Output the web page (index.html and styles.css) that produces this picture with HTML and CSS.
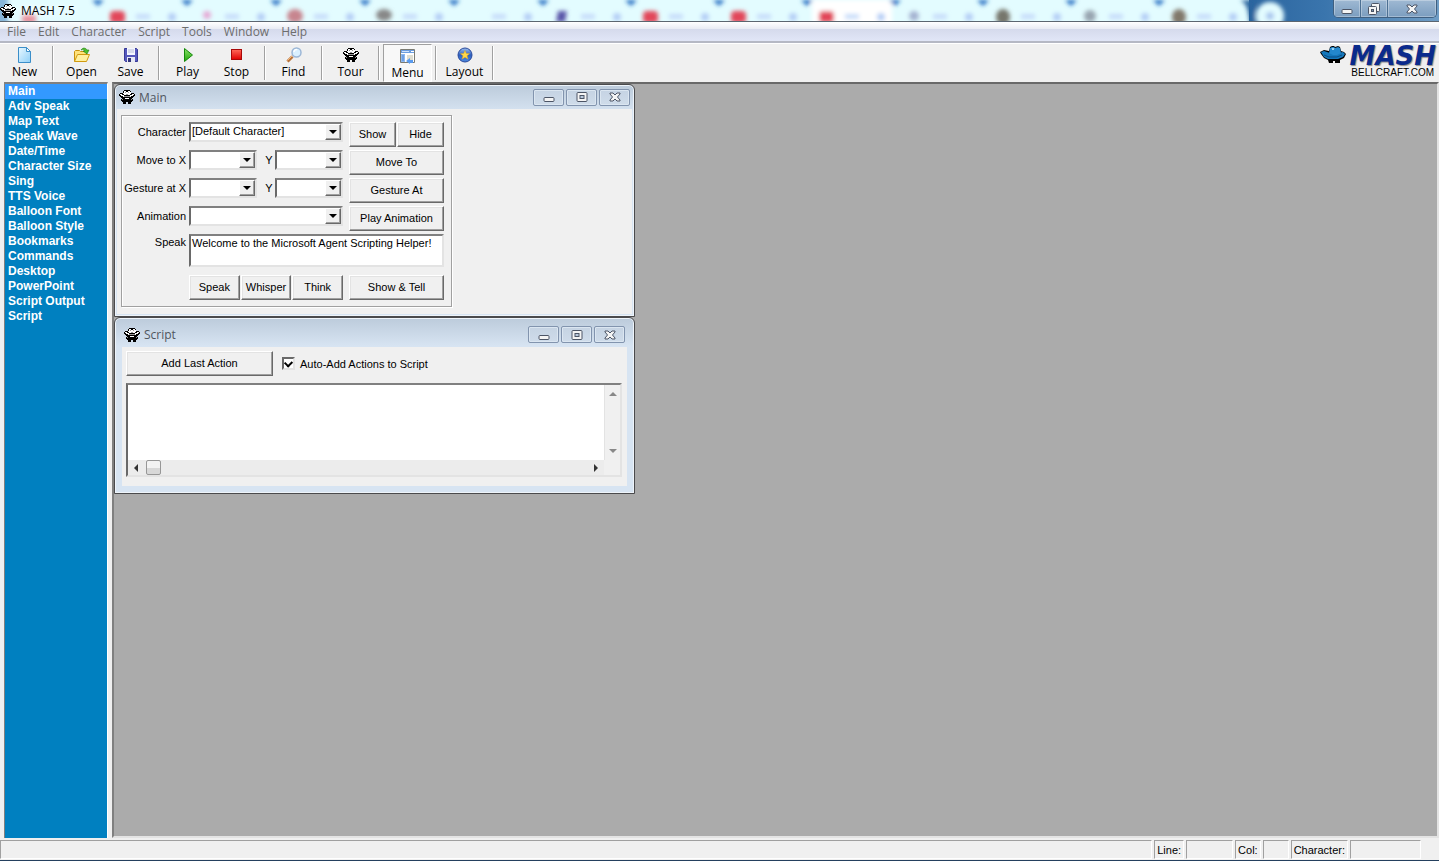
FILE: index.html
```
<!DOCTYPE html>
<html lang="en">
<head>
    <meta charset="utf-8">
    <title>MASH 7.5</title>
    <link rel="stylesheet" href="styles.css">
</head>
<body>
    <svg class="defs" width="0" height="0">
        <symbol id="agent" viewBox="0 0 16 16">
            <g shape-rendering="crispEdges">
                <path fill="#000" d="M5 1h6v1h1v2h3v1h1v2h-1v1h-1v1h-1v1h1v2h-1v1h-1v2H9v-2H7v2H4v-2H3v-1H2v-2h1V9H2V8H1V7H0V5h1V4h3V2h1z"/>
                <path fill="#fff" d="M5 2h2v1h2V2h2v1h1v2h-1v1H5V5H4V4h1zM1 5h2v1h2v1h6V6h2V5h2v1h-1v1h-2v1H4V7H2V6H1zM6 9h4v1H6z"/>
                <path fill="#999" d="M6 3h1v1H6zM9 3h1v1H9zM7 5h2v1H7zM5 7h6v1H5zM3 10h1v1H3zM12 10h1v1h-1z"/>
            </g>
        </symbol>
        <symbol id="win-min" viewBox="0 0 12 12">
            <rect x="1" y="6.500" width="10" height="4" rx="1" fill="#f4f4f4" stroke="#4c5566"/>
        </symbol>
        <symbol id="win-max" viewBox="0 0 12 12">
            <rect x="1" y="1.500" width="10" height="9" rx="1" fill="#f4f4f4" stroke="#4c5566"/>
            <rect x="4" y="4.500" width="4" height="3" fill="#b9c9dc" stroke="#4c5566"/>
        </symbol>
        <symbol id="win-restore" viewBox="0 0 12 12">
            <rect x="3.500" y=".5" width="8" height="8" rx="1" fill="#f4f4f4" stroke="#4c5566"/>
            <rect x=".5" y="3.500" width="8" height="8" rx="1" fill="#f4f4f4" stroke="#4c5566"/>
            <rect x="3.500" y="6.500" width="2" height="2" fill="#7894b5" stroke="#4c5566"/>
        </symbol>
        <symbol id="win-close" viewBox="0 0 12 12">
            <path fill="#f4f4f4" stroke="#4c5566" stroke-linejoin="round" d="M1 2h3l2 2 2-2h3v1L8.500 6 11 9v1H8L6 8l-2 2H1V9l2.500-3L1 3z"/>
        </symbol>
        <symbol id="tab" viewBox="0 0 89 21">
            <path d="M0-2h16L8 6z" fill="#1f68c0"/>
            <rect x="46" y="14" width="14" height="5" fill="#c6dcfa"/>
            <circle cx="82" cy="17" r="4" fill="#b3cdf6"/>
        </symbol>
    </svg>

    <header class="titlebar">
        <svg class="glass" width="1439" height="21" aria-hidden="true">
            <defs>
                <filter id="soft" x="-5%" y="-50%" width="110%" height="200%"><feGaussianBlur stdDeviation="2"/></filter>
                <linearGradient id="sky">
                    <stop offset="0" stop-color="#2b659f"/>
                    <stop offset=".4" stop-color="#3a75ad"/>
                    <stop offset="1" stop-color="#6f9dc5"/>
                </linearGradient>
            </defs>
            <rect width="1439" height="21" fill="#e3fcff"/>
            <rect x="1249" width="190" height="21" fill="url(#sky)"/>
            <g filter="url(#soft)">
                <rect x="-6" y="-6" width="14" height="34" fill="#87b5d8"/>
                <rect x="812" y="0" width="80" height="24" fill="#fff"/>
                <use href="#tab" x="90" width="89" height="21"/>
                <use href="#tab" x="179" width="89" height="21"/>
                <use href="#tab" x="268" width="89" height="21"/>
                <use href="#tab" x="357" width="89" height="21"/>
                <use href="#tab" x="446" width="89" height="21"/>
                <use href="#tab" x="535" width="89" height="21"/>
                <use href="#tab" x="623" width="89" height="21"/>
                <use href="#tab" x="711" width="89" height="21"/>
                <use href="#tab" x="799" width="89" height="21"/>
                <use href="#tab" x="887" width="89" height="21"/>
                <use href="#tab" x="975" width="89" height="21"/>
                <use href="#tab" x="1063" width="89" height="21"/>
                <use href="#tab" x="1151" width="89" height="21"/>
                <g fill="#e2465a">
                    <rect x="22" y="14" width="14" height="9" rx="4" fill="#e98d9a"/>
                    <rect x="110" y="11" width="15" height="12" rx="4"/>
                    <rect x="643" y="11" width="15" height="12" rx="4"/>
                    <rect x="731" y="11" width="15" height="12" rx="4"/>
                    <rect x="819" y="11" width="15" height="12" rx="4"/>
                </g>
                <circle cx="207" cy="15" r="4" fill="#e5a9d5"/>
                <ellipse cx="295" cy="16" rx="8" ry="7" fill="#c7858f"/>
                <ellipse cx="384" cy="15" rx="8" ry="6" fill="#888"/>
                <path d="M556 22l2-11h9l-2 11z" fill="#5854a8"/>
                <circle cx="914" cy="16" r="5" fill="#a4b2d0"/>
                <ellipse cx="1003" cy="17" rx="7" ry="8" fill="#76766c"/>
                <circle cx="1090" cy="16" r="6" fill="#98a5b0"/>
                <ellipse cx="1179" cy="17" rx="7" ry="8" fill="#81786a"/>
                <path d="M1240 0c9 4 8 15 10 24h5V0z" fill="#2b659f"/>
                <circle cx="1270" cy="16" r="14" fill="#e3fcff"/>
                <circle cx="1270" cy="16" r="4" fill="#a9c6ee"/>
            </g>
        </svg>
        <svg class="icon16"><use href="#agent"/></svg>
        <h1>MASH 7.5</h1>
        <div class="app-controls">
            <button aria-label="Minimize"><svg><use href="#win-min"/></svg></button>
            <button aria-label="Restore"><svg><use href="#win-restore"/></svg></button>
            <button class="wide" aria-label="Close"><svg><use href="#win-close"/></svg></button>
        </div>
    </header>

    <nav class="menubar">
        <button>File</button>
        <button>Edit</button>
        <button>Character</button>
        <button>Script</button>
        <button>Tools</button>
        <button>Window</button>
        <button>Help</button>
    </nav>

    <div class="toolbar">
        <button class="tool">
            <svg viewBox="0 0 16 16"><defs><linearGradient id="page" x2="1" y2="1"><stop stop-color="#e8f8ff"/><stop offset="1" stop-color="#8fd0f8"/></linearGradient></defs><path d="M1.500.5h8l4 4v11h-12z" fill="url(#page)" stroke="#3b8ec9"/><path d="M9.500.5v4h4z" fill="#fff" stroke="#3b8ec9"/></svg>
            New
        </button>
        <span class="sep"></span>
        <button class="tool">
            <svg viewBox="0 0 16 16"><path d="M.5 14.500V4.500l1-1h4l1 1h6v3" fill="#ffe27a" stroke="#c8900c"/><path d="M.5 14.500l3-7h12l-3 7z" fill="#fff0a0" stroke="#d09a10"/><path d="M7 3c2-3 5-2 6 0h2l-2 4-4-3h2c-1-1-2-2-4-1z" fill="#4fc12c" stroke="#25801a" stroke-width=".6"/></svg>
            Open
        </button>
        <button class="tool">
            <svg viewBox="0 0 16 16"><path d="M1.500 1.500h12l1 1v12h-12l-1-1z" fill="#5558bd" stroke="#363995"/><path d="M4 1h8v7H4z" fill="#f4f6ff"/><path d="M5 3h6M5 5h6" stroke="#b8bed8"/><path d="M4 10h8v5H4z" fill="#e6e8f4"/><path d="M5 11h3v4H5z" fill="#34377c"/></svg>
            Save
        </button>
        <span class="sep"></span>
        <button class="tool">
            <svg viewBox="0 0 16 16"><defs><linearGradient id="go" x2="0" y2="1"><stop stop-color="#8be36a"/><stop offset="1" stop-color="#22a40c"/></linearGradient></defs><path d="M4.500 1.500v13l8-6.500z" fill="url(#go)" stroke="#148a0a"/></svg>
            Play
        </button>
        <button class="tool">
            <svg viewBox="0 0 16 16"><defs><linearGradient id="halt" x2="0" y2="1"><stop stop-color="#ff6a5a"/><stop offset="1" stop-color="#e00000"/></linearGradient></defs><rect x="2.500" y="2.500" width="10" height="10" fill="url(#halt)" stroke="#a80808"/></svg>
            Stop
        </button>
        <span class="sep"></span>
        <button class="tool">
            <svg viewBox="0 0 16 16"><path d="M1.500 14.500l5-5" stroke="#b8733a" stroke-width="3"/><path d="M1.500 13.500l5-5" stroke="#f5b97c"/><circle cx="10.500" cy="5.500" r="4.500" fill="#d9f0ff" stroke="#9bb6d6" stroke-width="1.500"/><path d="M8 5c0-2 2-3 3-2" fill="none" stroke="#fff" stroke-width="1.500"/></svg>
            Find
        </button>
        <span class="sep"></span>
        <button class="tool">
            <svg><use href="#agent"/></svg>
            Tour
        </button>
        <span class="sep"></span>
        <button class="tool pressed" aria-pressed="true">
            <svg viewBox="0 0 16 16"><path d="M.5 1.500h14v13H.5z" fill="#fff" stroke="#7b7b72"/><path d="M1 2h13v3H1z" fill="#6c9ee0"/><path d="M2 3h7v1H2z" fill="#cfe2fb"/><path d="M11 3h3v1h-3z" fill="#fff"/><path d="M1 6h4v8H1z" fill="#8db8f0"/><path d="M2 8h2M2 10h2M2 12h2" stroke="#4f86d4"/><path d="M7 7h6v5H7z" fill="#deded2"/><path d="M6 13l4-3v2h3v3h-3v1z" fill="#5a9bee"/></svg>
            Menu
        </button>
        <span class="sep"></span>
        <button class="tool">
            <svg viewBox="0 0 16 16"><defs><linearGradient id="ball" x2="0" y2="1"><stop stop-color="#9fc0ee"/><stop offset=".5" stop-color="#2c5fc0"/><stop offset="1" stop-color="#4f8be0"/></linearGradient></defs><circle cx="8" cy="8" r="7" fill="url(#ball)" stroke="#28489a"/><path d="M8 3.500l1.300 3 3.200.2-2.500 2 .9 3.300L8 10.200 5.100 12 6 8.700l-2.500-2 3.200-.2z" fill="#ffd94a" stroke="#e8a818" stroke-width=".5"/></svg>
            Layout
        </button>
        <span class="sep"></span>
        <a class="brand" href="#">
            <svg class="brand-hat" viewBox="0 0 26 20"><path d="M0 7l4-2 5 1 1-4 2-1h2l1 1 3-1 2 1 1 4 3 1 2 2-2 4-4 2v3h-5v-2h-2v2H9l-1-3-4-2-3-4z" fill="#000"/><path d="M1 7l3-1 6 2h8l5-1 2 2-2 3-5 2H8l-4-2z" fill="#1477bb"/><path d="M9 8l1-5 2-1h2l1 1 3-1 2 1 1 5-4 2h-4z" fill="#2387cc"/><path d="M12 3l1 2 1-2" fill="none" stroke="#b5e8ff"/><path d="M4 10l5 2h8l5-2" fill="none" stroke="#0a4f86"/></svg>
            <span class="brand-text">
                <span class="brand-name">MASH</span>
                <span class="brand-site">BELLCRAFT.COM</span>
            </span>
        </a>
    </div>

    <div class="body">
        <ul class="sidebar">
            <li class="selected"><a href="#">Main</a></li>
            <li><a href="#">Adv Speak</a></li>
            <li><a href="#">Map Text</a></li>
            <li><a href="#">Speak Wave</a></li>
            <li><a href="#">Date/Time</a></li>
            <li><a href="#">Character Size</a></li>
            <li><a href="#">Sing</a></li>
            <li><a href="#">TTS Voice</a></li>
            <li><a href="#">Balloon Font</a></li>
            <li><a href="#">Balloon Style</a></li>
            <li><a href="#">Bookmarks</a></li>
            <li><a href="#">Commands</a></li>
            <li><a href="#">Desktop</a></li>
            <li><a href="#">PowerPoint</a></li>
            <li><a href="#">Script Output</a></li>
            <li><a href="#">Script</a></li>
        </ul>

        <main class="workspace">
            <section class="window">
                <div class="window-title">
                    <svg class="icon16"><use href="#agent"/></svg>
                    <h2>Main</h2>
                    <button aria-label="Minimize"><svg><use href="#win-min"/></svg></button>
                    <button aria-label="Maximize"><svg><use href="#win-max"/></svg></button>
                    <button aria-label="Close"><svg><use href="#win-close"/></svg></button>
                </div>
                <div class="window-body main-body">
                    <form class="group">
                        <div class="row">
                            <label class="caption" for="character">Character</label>
                            <div class="fields"><span class="combo"><select id="character"><option>[Default Character]</option></select><i></i></span></div>
                            <div class="actions"><button type="button" class="btn">Show</button><button type="button" class="btn">Hide</button></div>
                        </div>
                        <div class="row">
                            <label class="caption" for="moveX">Move to X</label>
                            <div class="fields">
                                <span class="combo"><select id="moveX"></select><i></i></span>
                                <label for="moveY">Y</label>
                                <span class="combo"><select id="moveY"></select><i></i></span>
                            </div>
                            <div class="actions"><button type="button" class="btn">Move To</button></div>
                        </div>
                        <div class="row">
                            <label class="caption" for="gestureX">Gesture at X</label>
                            <div class="fields">
                                <span class="combo"><select id="gestureX"></select><i></i></span>
                                <label for="gestureY">Y</label>
                                <span class="combo"><select id="gestureY"></select><i></i></span>
                            </div>
                            <div class="actions"><button type="button" class="btn">Gesture At</button></div>
                        </div>
                        <div class="row">
                            <label class="caption" for="animation">Animation</label>
                            <div class="fields"><span class="combo"><select id="animation"></select><i></i></span></div>
                            <div class="actions"><button type="button" class="btn">Play Animation</button></div>
                        </div>
                        <div class="row speak-row">
                            <label class="caption" for="speak">Speak</label>
                            <textarea id="speak" class="sunken">Welcome to the Microsoft Agent Scripting Helper!</textarea>
                        </div>
                        <div class="row">
                            <span class="caption"></span>
                            <div class="fields talk">
                                <button type="button" class="btn">Speak</button>
                                <button type="button" class="btn">Whisper</button>
                                <button type="button" class="btn">Think</button>
                            </div>
                            <div class="actions"><button type="button" class="btn">Show &amp; Tell</button></div>
                        </div>
                    </form>
                </div>
            </section>

            <section class="window thick">
                <div class="window-title">
                    <svg class="icon16"><use href="#agent"/></svg>
                    <h2>Script</h2>
                    <button aria-label="Minimize"><svg><use href="#win-min"/></svg></button>
                    <button aria-label="Maximize"><svg><use href="#win-max"/></svg></button>
                    <button aria-label="Close"><svg><use href="#win-close"/></svg></button>
                </div>
                <div class="window-body script-body">
                    <div class="script-tools">
                        <button class="btn">Add Last Action</button>
                        <input type="checkbox" id="autoAdd" checked>
                        <label for="autoAdd">Auto-Add Actions to Script</label>
                    </div>
                    <div class="editor sunken">
                        <textarea aria-label="Script"></textarea>
                        <div class="scroll-v"><i class="up"></i><i class="down"></i></div>
                        <div class="scroll-h"><i class="left"></i><span class="thumb"></span><i class="right"></i></div>
                    </div>
                </div>
            </section>
        </main>
    </div>

    <footer class="statusbar">
        <span class="pane grow"></span>
        <span class="pane">Line:</span>
        <span class="pane medium"></span>
        <span class="pane">Col:</span>
        <span class="pane small"></span>
        <span class="pane">Character:</span>
        <span class="pane large"></span>
    </footer>
</body>
</html>
```
FILE: styles.css
```
* {
    box-sizing: border-box;
}
body {
    margin: 0;
    height: 100vh;
    display: flex;
    flex-direction: column;
    overflow: hidden;
    background: #f0f0f0;
    font-family: "Liberation Sans", Arial, sans-serif;
    font-size: 11px;
    color: #000;
}
button, select, textarea, input {
    font: inherit;
    color: inherit;
    margin: 0;
    padding: 0;
}
a {
    color: inherit;
    text-decoration: none;
}
.defs {
    position: absolute;
}
.icon16 {
    width: 16px;
    height: 16px;
    flex: none;
}

/* title bar */
.titlebar {
    position: relative;
    display: flex;
    align-items: center;
    height: 22px;
    flex: none;
    background: #6f9dc5;
    border-bottom: 1px solid #5c6670;
    overflow: hidden;
}
.glass {
    position: absolute;
    top: 0;
    left: 0;
}
.titlebar .icon16, .titlebar h1, .app-controls {
    position: relative;
}
h1, h2 {
    margin: 0;
    font: 12px "Open Sans", "Segoe UI", sans-serif;
}
.titlebar h1 {
    margin-left: 5px;
    text-shadow: 0 0 6px #fff, 0 0 6px #fff;
}
.app-controls {
    display: flex;
    align-self: flex-start;
    margin: 0 2px 0 auto;
    border: 1px solid #3f5f80;
    border-top: 0;
    border-radius: 0 0 5px 5px;
    overflow: hidden;
}
.app-controls button {
    display: flex;
    align-items: center;
    justify-content: center;
    width: 27px;
    height: 17px;
    border: 0;
    border-right: 1px solid #4c6f92;
    background: linear-gradient(#9fb9d3, #7b9dbf);
    box-shadow: inset 0 0 0 1px rgba(255, 255, 255, 0.3);
}
.app-controls .wide {
    width: 48px;
    border-right: 0;
}
.app-controls svg, .window-title button svg {
    width: 12px;
    height: 12px;
}

/* menu */
.menubar {
    display: flex;
    height: 21px;
    flex: none;
    padding-left: 1px;
    background: linear-gradient(#fff, #e8ebf4 7px, #d5daec 7px, #e0e5f6 18px);
    border-bottom: 2px solid #b5b8c4;
}
.menubar button {
    padding: 0 6px;
    border: 0;
    background: none;
    font: 12px "Open Sans", "Segoe UI", sans-serif;
    color: #6d6d6d;
}

/* toolbar */
.toolbar {
    display: flex;
    height: 39px;
    flex: none;
    border-top: 1px solid #fff;
}
.tool {
    display: flex;
    flex-direction: column;
    align-items: center;
    width: 49px;
    height: 38px;
    padding-top: 3px;
    border: 0;
    background: none;
    font: 12px/17px "Open Sans", "Segoe UI", sans-serif;
}
.tool svg {
    width: 16px;
    height: 16px;
    flex: none;
}
.tool.pressed {
    border: 1px solid #fff;
    border-top-color: #a0a0a0;
    border-left-color: #a0a0a0;
    background: #f8f8f8;
}
.sep {
    width: 2px;
    height: 34px;
    margin: 2px 3px;
    border-left: 1px solid #a0a0a0;
    border-right: 1px solid #fff;
}
.brand {
    display: flex;
    margin-left: auto;
    padding-right: 3px;
}
.brand-hat {
    width: 26px;
    height: 20px;
    margin: 1px 4px 0 0;
}
.brand-text {
    display: flex;
    flex-direction: column;
    align-items: center;
}
.brand-name {
    font: italic bold 26px/24px "DejaVu Sans", Verdana, sans-serif;
    color: #0a2a8c;
    text-shadow: 1px 1px 1px #888;
}
.brand-site {
    font-size: 10px;
    line-height: 10px;
}

/* body */
.body {
    display: flex;
    flex: 1;
    min-height: 0;
}
.sidebar {
    width: 104px;
    margin: 0 4px;
    padding: 0;
    flex: none;
    list-style: none;
    background: #0080c0;
    border: 1px solid #808080;
    border-top-width: 2px;
    border-right-color: #fff;
    border-bottom: 0;
    font-weight: bold;
    font-size: 12px;
    line-height: 15px;
    color: #fff;
}
.sidebar a {
    display: block;
    padding-left: 3px;
}
.sidebar .selected {
    background: #3399ff;
}
.workspace {
    flex: 1;
    background: #ababab;
    border: 2px solid;
    border-color: #696969 #e3e3e3 #e3e3e3 #808080;
    overflow: hidden;
}

/* mdi windows */
.window {
    width: 521px;
    border: 1px solid #4a4a4c;
    border-radius: 6px 6px 0 0;
    background: linear-gradient(#bccbdb, #d7e4f2 28px);
    box-shadow: inset 0 0 0 1px #eef4fa;
    padding: 0 2px 2px;
}
.window.thick {
    padding: 4px 7px 7px;
}
.window-title {
    display: flex;
    align-items: center;
    gap: 2px;
    height: 24px;
    padding: 0 2px;
}
.thick .window-title {
    height: 25px;
}
.window-title h2 {
    flex: 1;
    margin-left: 2px;
    color: #50565e;
}
.window-title button {
    display: flex;
    align-items: center;
    justify-content: center;
    width: 31px;
    height: 17px;
    border: 1px solid #8294ae;
    border-radius: 2px;
    background: linear-gradient(#c5d3e3, #cfdcea);
    box-shadow: inset 0 0 0 1px #dbe6f1;
}
.window-body {
    background: #f0f0f0;
}
.main-body {
    padding: 6px 4px 7px;
}
.group {
    width: 331px;
    padding: 6px 7px 5px 0;
    border: 1px solid #a0a0a0;
    box-shadow: 1px 1px 0 #fff, inset 1px 1px 0 #fff;
}
.row {
    display: flex;
    height: 28px;
}
.row:last-child {
    height: 26px;
}
.caption {
    width: 64px;
    margin-right: 3px;
    text-align: right;
    line-height: 20px;
}
.fields {
    display: flex;
    align-items: flex-start;
    justify-content: space-between;
    width: 154px;
    margin-right: 6px;
    line-height: 20px;
}
.fields label {
    margin-left: 6px;
}
.combo {
    position: relative;
    flex: 1;
    max-width: 154px;
    height: 20px;
    border: 2px solid;
    border-color: #808080 #e3e3e3 #e3e3e3 #696969;
    background: #fff;
}
.fields label + .combo, .combo:has(+ label) {
    flex: none;
    width: 68px;
}
.combo select {
    display: block;
    width: 100%;
    height: 16px;
    padding: 0 0 2px 1px;
    appearance: none;
    border: 0;
    background: #fff;
    line-height: 14px;
}
.combo i {
    position: absolute;
    top: 0;
    right: 0;
    width: 16px;
    height: 16px;
    border: 1px solid;
    border-color: #fff #696969 #696969 #fff;
    background: #f0f0f0;
    box-shadow: inset -1px -1px 0 #a0a0a0;
    pointer-events: none;
}
.combo i::after {
    content: "";
    display: block;
    margin: 5px 3px;
    border: 4px solid transparent;
    border-top-color: #000;
    border-bottom: 0;
}
.btn {
    flex: 1;
    height: 25px;
    padding-bottom: 2px;
    border: 1px solid;
    border-color: #fff #696969 #696969 #fff;
    background: #f0f0f0;
    box-shadow: inset -1px -1px 0 #a0a0a0, inset 1px 1px 0 #e3e3e3;
    white-space: nowrap;
}
.actions {
    display: flex;
    gap: 1px;
    width: 95px;
}
.talk {
    gap: 1px;
}
.sunken {
    border: 2px solid;
    border-color: #808080 #e3e3e3 #e3e3e3 #696969;
    background: #fff;
}
.speak-row {
    height: 41px;
}
.speak-row .caption {
    line-height: 16px;
}
.speak-row textarea {
    flex: 1;
    height: 33px;
    padding: 1px;
    resize: none;
    overflow: hidden;
}

/* script window */
.script-body {
    padding: 4px 5px 9px 4px;
}
.script-tools {
    display: flex;
    align-items: center;
    margin-bottom: 7px;
}
.script-tools .btn {
    flex: none;
    width: 147px;
}
.script-tools input {
    appearance: none;
    display: flex;
    width: 13px;
    height: 13px;
    margin: 0 5px 0 9px;
    border: 2px solid;
    border-color: #696969 #e3e3e3 #e3e3e3 #696969;
    background: #fff;
}
.script-tools input:checked::after {
    content: "";
    width: 8px;
    height: 4px;
    margin: 1px;
    border: 2px solid #000;
    border-top: 0;
    border-right: 0;
    transform: rotate(-45deg);
}
.editor {
    display: grid;
    grid-template-columns: 1fr 16px;
    grid-template-rows: 75px 15px;
    background: #f0f0f0;
}
.editor textarea {
    border: 0;
    resize: none;
    background: #fff;
}
.scroll-v {
    display: flex;
    flex-direction: column;
    align-items: center;
    justify-content: space-between;
    padding: 7px 0;
    border-left: 1px solid #e3e3e3;
}
.scroll-h {
    display: flex;
    align-items: center;
    padding: 0 6px;
    background: #ececec;
}
.thumb {
    width: 15px;
    height: 15px;
    margin-left: 8px;
    border: 1px solid #979797;
    border-radius: 2px;
    background: linear-gradient(#f3f3f3 50%, #d8d8d8 50%);
}
.up, .down, .left, .right {
    border: 4px solid transparent;
}
.up {
    border-top: 0;
    border-bottom-color: #888;
}
.down {
    border-bottom: 0;
    border-top-color: #888;
}
.left {
    border-left: 0;
    border-right-color: #333;
}
.right {
    margin-left: auto;
    border-right: 0;
    border-left-color: #333;
}

/* status bar */
.statusbar {
    display: flex;
    gap: 2px;
    height: 23px;
    flex: none;
    padding: 2px 18px 1px 0;
    border-bottom: 1px solid #24405e;
}
.pane {
    padding: 0 2px;
    border: 1px solid #a0a0a0;
    border-right-color: #fff;
    border-bottom-color: #fff;
    line-height: 18px;
}
.pane.grow {
    flex: 1;
}
.pane.small {
    width: 26px;
}
.pane.medium {
    width: 47px;
}
.pane.large {
    width: 71px;
}
```
